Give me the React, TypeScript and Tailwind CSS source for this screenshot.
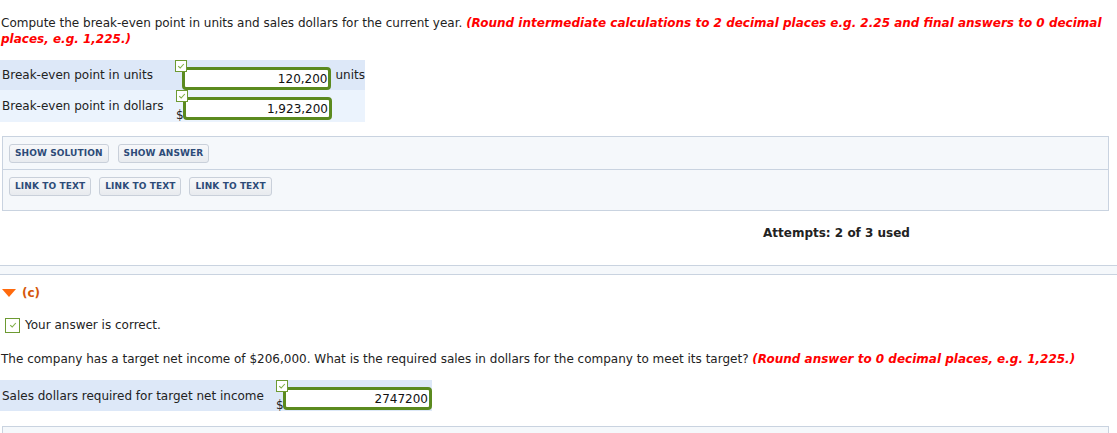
function Check({ className = "", thick = false }: { className?: string; thick?: boolean }) {
  return (
    <span
      className={
        "flex items-center justify-center bg-white border-[#6d9a32] " +
        (thick ? "border-[1.5px] " : "border ") +
        className
      }
    >
      <svg viewBox="0 0 10 10" className="w-[8px] h-[8px]">
        <path d="M1.5 5.2 L4 7.5 L8.5 2.5" fill="none" stroke="#7fae45" strokeWidth="1.4" />
      </svg>
    </span>
  );
}

function AnswerInput({
  value,
  width,
  dollar = false,
}: {
  value: string;
  width: string;
  dollar?: boolean;
}) {
  return (
    <div className="relative pt-[7px] pl-[7px]">
      <Check className="absolute left-0 top-0 w-[12px] h-[12px]" />
      {dollar && (
        <span className="absolute left-0 bottom-[-2px] text-[12px] leading-[14px] text-[#222]">$</span>
      )}
      <div
        className={
          "h-[23px] border-[3px] border-[#5b8a1f] rounded-[4px] bg-white flex items-center justify-end pr-[1px] text-[12px] text-[#111] " +
          width
        }
      >
        {value}
      </div>
    </div>
  );
}

function Btn({ children }: { children: React.ReactNode }) {
  return (
    <button className="h-[19px] px-[5px] border border-[#c9d0da] rounded-[3px] bg-gradient-to-b from-[#f7f8fa] to-[#e8ebef] text-[9px] font-bold text-[#2d4b78] leading-none tracking-[0.1px]">
      {children}
    </button>
  );
}

export default function App() {
  return (
    <div
      className="w-[1117px] h-[433px] overflow-hidden bg-white text-[12px] leading-[16px] text-[#222]"
      style={{ fontFamily: "'DejaVu Sans', Verdana, sans-serif" }}
    >
      <p className="pt-[15px] pl-[1px]">
        Compute the break-even point in units and sales dollars for the current year.{" "}
        <span className="text-[#ff0000] font-bold italic">
          (Round intermediate calculations to 2 decimal places e.g. 2.25 and final answers to 0 decimal
          <br />
          places, e.g. 1,225.)
        </span>
      </p>

      <div className="mt-[13px] w-[365px]">
        <div className="h-[30px] bg-[#dde8f8] flex items-start">
          <span className="w-[176px] pl-[2px] self-center">Break-even point in units</span>
          <AnswerInput value="120,200" width="w-[149px]" />
          <span className="ml-[4px] mt-[7px]">units</span>
        </div>
        <div className="h-[32px] bg-[#ebf3fd] flex items-start">
          <span className="w-[176px] pl-[2px] mt-[8px]">Break-even point in dollars</span>
          <AnswerInput value="1,923,200" width="w-[149px]" dollar />
        </div>
      </div>

      <div className="mt-[14px] ml-[2px] w-[1107px] border border-[#c9d3e0] bg-[#f5f8fb]">
        <div className="h-[33px] flex items-center gap-[9px] pl-[6px] border-b border-[#c9d3e0]">
          <Btn>SHOW SOLUTION</Btn>
          <Btn>SHOW ANSWER</Btn>
        </div>
        <div className="h-[40px] flex items-start pt-[7px] gap-[8px] pl-[6px]">
          <Btn>LINK TO TEXT</Btn>
          <Btn>LINK TO TEXT</Btn>
          <Btn>LINK TO TEXT</Btn>
        </div>
      </div>

      <div className="mt-[14px] ml-[763px] font-bold">Attempts: 2 of 3 used</div>

      <div className="mt-[24px] h-[10px] border-y border-[#c9d3e0] bg-[#f5f8fb]" />

      <div className="mt-[10px] flex items-center pl-[2px] gap-[6px]">
        <svg viewBox="0 0 14 8" className="w-[14px] h-[8px]">
          <path d="M0 0 L14 0 L7 8 Z" fill="#ff6a0d" />
        </svg>
        <span className="font-bold text-[#d5570b]">(c)</span>
      </div>

      <div className="mt-[16px] flex items-center pl-[5px] gap-[5px]">
        <Check thick className="w-[15px] h-[15px]" />
        <span>Your answer is correct.</span>
      </div>

      <p className="mt-[18px] pl-[1px]">
        The company has a target net income of $206,000. What is the required sales in dollars for the company to meet its target?{" "}
        <span className="text-[#ff0000] font-bold italic">(Round answer to 0 decimal places, e.g. 1,225.)</span>
      </p>

      <div className="mt-[13px] w-[432px] h-[31px] bg-[#dde8f8] flex items-start">
        <span className="w-[276px] pl-[2px] mt-[8px]">Sales dollars required for target net income</span>
        <AnswerInput value="2747200" width="w-[149px]" dollar />
      </div>

      <div className="mt-[15px] ml-[2px] w-[1107px] h-[40px] border border-[#c9d3e0] bg-[#f5f8fb]" />
    </div>
  );
}
